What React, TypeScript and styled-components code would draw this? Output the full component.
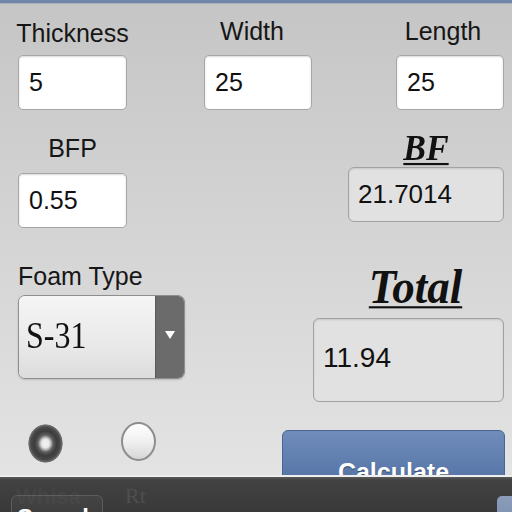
import styled, { createGlobalStyle } from "styled-components";

const Global = createGlobalStyle`
  html, body {
    margin: 0;
    padding: 0;
  }
  body {
    font-family: "Liberation Sans", Arial, sans-serif;
    color: #161616;
  }
`;

const App = (): JSX.Element => {
  return (
    <>
      <Global />
      <Page>
        <Screen>
          <TopStrip />
          <Content>
            <TopRow>
              <Field $w={109} $gap={8}>
                <Label $mt={2}>Thickness</Label>
                <Input readOnly value="5" />
              </Field>
              <Field $w={108} $gap={10}>
                <Label $dx={-6}>Width</Label>
                <Input readOnly value="25" />
              </Field>
              <Field $w={108} $gap={10}>
                <Label $dx={-7}>Length</Label>
                <Input readOnly value="25" />
              </Field>
            </TopRow>

            <SplitRow $mt={21}>
              <Field $w={109} $gap={11}>
                <Label $mt={3}>BFP</Label>
                <Input readOnly value="0.55" />
              </Field>
              <Field $w={156} $gap={2}>
                <Title $size={34}>BF</Title>
                <Output $h={55} $size={26}>21.7014</Output>
              </Field>
            </SplitRow>

            <SplitRow $mt={33}>
              <Field $w={167} $gap={5} $align="flex-start">
                <Label $mt={1}>Foam Type</Label>
                <Select>
                  <SelectValue>
                    <span>S-31</span>
                  </SelectValue>
                  <SelectArrow>
                    <svg width="10" height="8" viewBox="0 0 10 8">
                      <path d="M0 0 L10 0 L5 8 Z" fill="#fff" />
                    </svg>
                  </SelectArrow>
                </Select>
              </Field>
              <Field $w={191} $gap={8}>
                <Title $size={45} $mt={4} $dx={7}>
                  Total
                </Title>
                <Output $h={84} $size={28} $dy={-2}>
                  11.94
                </Output>
              </Field>
            </SplitRow>

            <ActionRow>
              <Radio $checked />
              <Radio />
              <CalcButton>Calculate</CalcButton>
            </ActionRow>
          </Content>
        </Screen>

        <Footer>
          <Ghost>Whisa</Ghost>
          <SearchButton>Search</SearchButton>
          <GhostSerif>Rt</GhostSerif>
          <CornerButton />
        </Footer>
      </Page>
    </>
  );
};

const Page = styled.div`
  width: 512px;
  height: 512px;
  overflow: hidden;
  display: flex;
  flex-direction: column;
`;

const Screen = styled.div`
  height: 475px;
  flex-shrink: 0;
  overflow: hidden;
  background: linear-gradient(#c5c5c5 0%, #d3d3d3 45%, #e3e3e3 100%);
`;

const TopStrip = styled.div`
  height: 3px;
  background: #7187aa;
  border-bottom: 1px solid #a8b0bc;
`;

const Content = styled.div`
  padding: 13px 8px 0 18px;
`;

const TopRow = styled.div`
  display: grid;
  grid-template-columns: 186px 192px 108px;
  align-items: start;
`;

const SplitRow = styled.div<{ $mt: number }>`
  display: flex;
  justify-content: space-between;
  align-items: flex-start;
  margin-top: ${(p) => p.$mt}px;
`;

const Field = styled.div<{ $w: number; $gap: number; $align?: string }>`
  width: ${(p) => p.$w}px;
  display: flex;
  flex-direction: column;
  align-items: ${(p) => p.$align || "center"};
  gap: ${(p) => p.$gap}px;
`;

const Label = styled.div<{ $mt?: number; $dx?: number }>`
  font-size: 25px;
  line-height: 28px;
  white-space: nowrap;
  margin-top: ${(p) => p.$mt || 0}px;
  transform: translateX(${(p) => p.$dx || 0}px);
`;

const Title = styled.div<{ $size: number; $mt?: number; $dx?: number }>`
  font-family: "Liberation Serif", "Times New Roman", serif;
  font-weight: bold;
  font-style: italic;
  font-size: ${(p) => p.$size}px;
  line-height: ${(p) => p.$size}px;
  text-decoration: underline;
  text-decoration-thickness: 2px;
  text-underline-offset: 3px;
  color: #111;
  margin-top: ${(p) => p.$mt || 0}px;
  transform: translateX(${(p) => p.$dx || 0}px) scaleY(1.07);
`;

const Input = styled.input`
  box-sizing: border-box;
  width: 100%;
  height: 55px;
  margin: 0;
  padding: 0 10px;
  border: 1px solid #a6a6a6;
  border-radius: 5px;
  background: #fff;
  box-shadow: inset 0 1px 2px rgba(0, 0, 0, 0.15);
  font-family: "Liberation Sans", Arial, sans-serif;
  font-size: 25px;
  color: #111;
  outline: none;
`;

const Output = styled.div<{ $h: number; $size: number; $dy?: number }>`
  box-sizing: border-box;
  width: 100%;
  height: ${(p) => p.$h}px;
  display: flex;
  align-items: center;
  padding: 0 9px ${(p) => -(p.$dy || 0) * 2}px 9px;
  border: 1px solid #a2a2a2;
  border-radius: 6px;
  background: #e1e1e1;
  box-shadow: inset 0 1px 2px rgba(0, 0, 0, 0.12);
  font-size: ${(p) => p.$size}px;
  color: #111;
`;

const Select = styled.div`
  box-sizing: border-box;
  width: 167px;
  height: 84px;
  display: flex;
  border: 1px solid #8e8e8e;
  border-radius: 7px;
  overflow: hidden;
  box-shadow: 0 1px 2px rgba(0, 0, 0, 0.15);
`;

const SelectValue = styled.div`
  flex: 1;
  display: flex;
  align-items: center;
  padding-left: 7px;
  background: linear-gradient(#f5f5f5, #e9e9e9 60%, #dcdcdc);
  font-family: "Liberation Serif", "Times New Roman", serif;
  font-size: 32px;
  color: #111;

  span {
    display: inline-block;
    transform: scaleY(1.2);
    margin-top: -4px;
  }
`;

const SelectArrow = styled.div`
  width: 28px;
  display: flex;
  align-items: center;
  justify-content: center;
  background: #6b6b6b;
  border-left: 1px solid #5a5a5a;
  padding-bottom: 4px;
`;

const ActionRow = styled.div`
  display: flex;
  align-items: flex-start;
  margin-top: 20px;
`;

const Radio = styled.div<{ $checked?: boolean }>`
  box-sizing: border-box;
  width: 35px;
  height: 39px;
  border-radius: 50%;
  margin-top: ${(p) => (p.$checked ? 2 : 0)}px;
  margin-left: ${(p) => (p.$checked ? 10 : 58)}px;
  border: ${(p) => (p.$checked ? "none" : "2px solid #8d8d8d")};
  background: ${(p) =>
    p.$checked
      ? "radial-gradient(closest-side, #f4f4f4 0%, #e8e8e8 22%, #b0b0b0 32%, #5e5e5e 44%, #3c3c3c 64%, #494949 84%, #747474 96%, rgba(120,120,120,0) 100%)"
      : "linear-gradient(#ffffff, #f0f0f0 50%, #d6d6d6)"};
  filter: blur(0.4px);
`;

const CalcButton = styled.div`
  box-sizing: border-box;
  width: 223px;
  height: 84px;
  margin-left: auto;
  margin-right: -1px;
  margin-top: 8px;
  display: flex;
  align-items: center;
  justify-content: center;
  border: 1px solid #4b6590;
  border-radius: 6px;
  background: linear-gradient(#6f8cbb, #5a79aa 50%, #4d6c9e);
  color: #fff;
  font-weight: bold;
  font-size: 25px;
  text-shadow: 0 1px 1px rgba(0, 0, 0, 0.45);
`;

const Footer = styled.div`
  position: relative;
  flex: 1;
  display: flex;
  align-items: flex-start;
  padding-left: 11px;
  border-top: 2px solid #eeeeee;
  background: linear-gradient(#5a5a5a 0, #424242 3px, #393939 60%, #333 100%);
`;

const SearchButton = styled.div`
  box-sizing: border-box;
  width: 92px;
  height: 40px;
  margin-top: 18px;
  padding-top: 9px;
  text-align: center;
  border: 1px solid #5c5c5c;
  border-radius: 6px;
  background: linear-gradient(#444, #363636);
  color: #fff;
  font-weight: bold;
  font-size: 24px;
  line-height: 25px;
`;

const Ghost = styled.div`
  position: absolute;
  left: 16px;
  top: 7px;
  font-size: 22px;
  font-weight: bold;
  color: rgba(255, 255, 255, 0.04);
`;

const GhostSerif = styled.div`
  margin-left: 22px;
  margin-top: 8px;
  font-family: "Liberation Serif", "Times New Roman", serif;
  font-size: 22px;
  line-height: 22px;
  color: #4f4f4f;
`;

const CornerButton = styled.div`
  width: 22px;
  height: 40px;
  margin-left: auto;
  margin-right: -7px;
  margin-top: 19px;
  border-radius: 5px;
  background: linear-gradient(#8b9dba, #7489aa);
`;

export default App;
